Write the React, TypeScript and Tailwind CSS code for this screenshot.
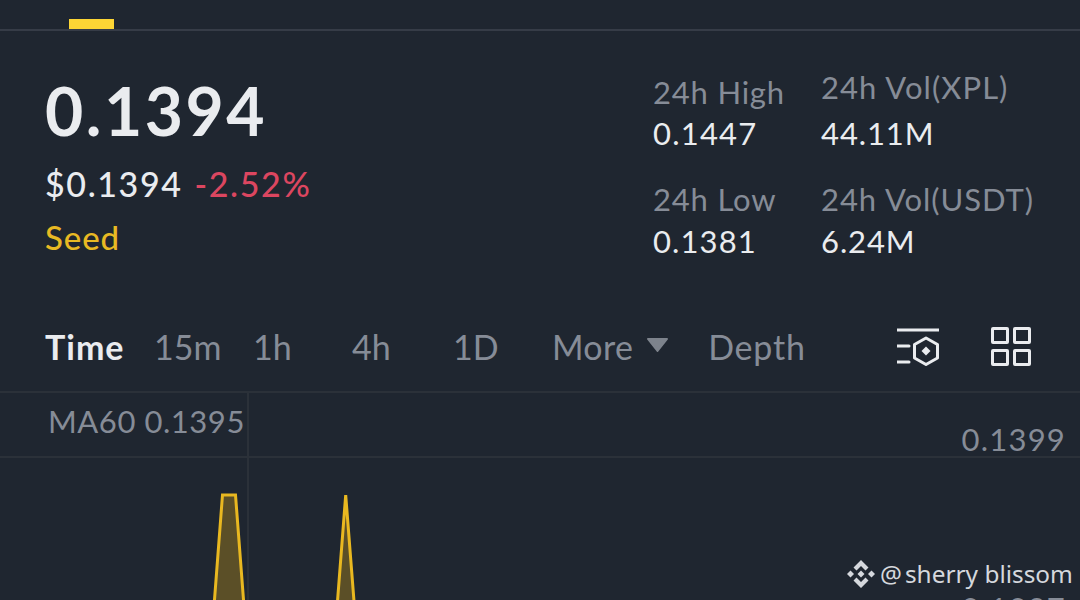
const FONT = "font-['Lato','Open_Sans',sans-serif]";

function Stat({ label, value, className, labelClass, valueClass }: { label: string; value: string; className?: string; labelClass: string; valueClass: string }) {
  return (
    <div className={`flex flex-col ${className ?? ''}`}>
      <span className={`whitespace-nowrap text-[31px] leading-[38px] text-[#868c97] ${labelClass}`}>{label}</span>
      <span className={`whitespace-nowrap text-[31px] leading-[38px] text-[#eaecef] ${valueClass}`}>{value}</span>
    </div>
  );
}

function BnbMark() {
  return (
    <svg width="28" height="28" viewBox="0 0 28 28" fill="#d5d8dd" className="shrink-0">
      <path d="M14 0 L21.5 7.5 L18.5 10.5 L14 6 L9.5 10.5 L6.5 7.5 Z" />
      <path d="M14 28 L6.5 20.5 L9.5 17.5 L14 22 L18.5 17.5 L21.5 20.5 Z" />
      <path d="M3.5 10.5 L7 14 L3.5 17.5 L0 14 Z" />
      <path d="M24.5 10.5 L28 14 L24.5 17.5 L21 14 Z" />
      <path d="M14 10.5 L17.5 14 L14 17.5 L10.5 14 Z" />
    </svg>
  );
}

export default function App() {
  const tabs = [
    { label: 'Time', cls: 'w-[109px] text-[#eaecef] font-bold tracking-[1px]' },
    { label: '15m', cls: 'w-[99px] text-[#868c97]' },
    { label: '1h', cls: 'w-[99px] text-[#868c97]' },
    { label: '4h', cls: 'w-[101px] text-[#868c97]' },
    { label: '1D', cls: 'w-[99px] text-[#868c97]' },
  ];

  return (
    <div className={`h-[600px] w-[1080px] overflow-hidden bg-[#1f2630] ${FONT}`}>
      {/* Top tabs */}
      <div className="h-[31px] border-b-2 border-[#363c47] pl-[69px] pt-[19px]">
        <div className="h-[10px] w-[45px] bg-[#fcd535]" />
      </div>

      {/* Price header */}
      <div className="flex h-[279px] pl-[45px]">
        <div className="flex w-[608px] flex-col">
          <div className="mt-[40px] text-[66px] font-bold leading-[80px] tracking-[2.5px] text-[#eaecef]">0.1394</div>
          <div className="mt-[13px] flex text-[34px] font-medium leading-[40px] tracking-[1.6px]">
            <span className="text-[#eaecef]">$0.1394</span>
            <span className="ml-[12px] text-[#dc4660]">-2.52%</span>
          </div>
          <div className="mt-[13px] text-[33px] font-medium leading-[40px] tracking-[0.9px] text-[#e8b923]">Seed</div>
        </div>
        <div className="flex w-[168px] flex-col pt-[42px]">
          <Stat label="24h High" value="0.1447" labelClass="tracking-[0.8px]" valueClass="mt-[3px] tracking-[1.2px]" />
          <Stat label="24h Low" value="0.1381" className="mt-[28px]" labelClass="tracking-[0.8px]" valueClass="mt-[4px] tracking-[1.1px]" />
        </div>
        <div className="flex flex-col pt-[37px]">
          <Stat label="24h Vol(XPL)" value="44.11M" labelClass="tracking-[1.05px]" valueClass="mt-[8px] tracking-[0.9px]" />
          <Stat label="24h Vol(USDT)" value="6.24M" className="mt-[28px]" labelClass="tracking-[0.95px]" valueClass="mt-[4px] tracking-[0.9px]" />
        </div>
      </div>

      {/* Interval tabs */}
      <div className="flex h-[83px] items-center border-b-2 border-[#2b3139] pb-[8px] pl-[45px] pr-[49px] text-[34px]">
        {tabs.map((t) => (
          <span key={t.label} className={t.cls}>
            {t.label}
          </span>
        ))}
        <span className="tracking-[0.3px] text-[#868c97]">More</span>
        <svg width="23" height="14" viewBox="0 0 23 14" className="mb-[3px] ml-[13px]">
          <path d="M2 1 H21 L11.5 13 Z" fill="#7d838c" stroke="#7d838c" strokeWidth="2" strokeLinejoin="round" />
        </svg>
        <span className="ml-[39px] tracking-[0.8px] text-[#868c97]">Depth</span>
        <svg width="42" height="38" viewBox="0 0 42 38" fill="none" stroke="#eaecef" strokeWidth="3" className="ml-auto mt-[1px]">
          <path d="M0 2 H42 M0 18 H12 M0 34 H12" strokeLinecap="round" />
          <path d="M29 10 L40.5 16.5 V30 L29 36.5 L17.5 30 V16.5 Z" strokeLinejoin="round" />
          <path d="M29 18.5 L33.5 23 L29 27.5 L24.5 23 Z" fill="#eaecef" stroke="none" />
        </svg>
        <div className="ml-[52px] grid grid-cols-2 gap-x-[4px] gap-y-[5px]">
          <div className="h-[17px] w-[18px] rounded-[2px] border-[3px] border-[#eaecef]" />
          <div className="h-[17px] w-[18px] rounded-[2px] border-[3px] border-[#eaecef]" />
          <div className="h-[17px] w-[18px] rounded-[2px] border-[3px] border-[#eaecef]" />
          <div className="h-[17px] w-[18px] rounded-[2px] border-[3px] border-[#eaecef]" />
        </div>
      </div>

      {/* Chart */}
      <div className="relative h-[207px]">
        <div className="flex h-[65px] items-center justify-between border-b-2 border-[#2b3139] pl-[48px] pr-[14px] text-[31px] text-[#868c97]">
          <span className="mb-[6px] tracking-[0.55px]">MA60 0.1395</span>
          <span className="mt-[30px] tracking-[1.2px]">0.1399</span>
        </div>
        <div className="absolute bottom-0 left-[247px] top-0 w-[2px] bg-[#2b3139]" />
        <svg width="180" height="107" viewBox="0 0 180 107" className="absolute left-[200px] top-[100px]" fill="none">
          <path d="M14.1 112 L22.5 2 H35.5 L43.9 112 Z" fill="#5b4f27" stroke="#e9b820" strokeWidth="3" />
          <path d="M137.2 112 L145.7 2 L154.3 112 Z" fill="#5b4f27" stroke="#e9b820" strokeWidth="3" />
        </svg>
        <div className="absolute left-[847px] top-[166px] flex items-center whitespace-nowrap font-['Noto_Sans',sans-serif] text-[24.4px] leading-[30px] text-[#d5d8dd]">
          <BnbMark />
          <span className="ml-[5px]">@</span>
          <span className="ml-[3px]">sherry blissom</span>
        </div>
        <span className="absolute right-[14px] top-[196px] text-[31px] leading-[38px] tracking-[1.2px] text-[#868c97]">0.1397</span>
      </div>
    </div>
  );
}
